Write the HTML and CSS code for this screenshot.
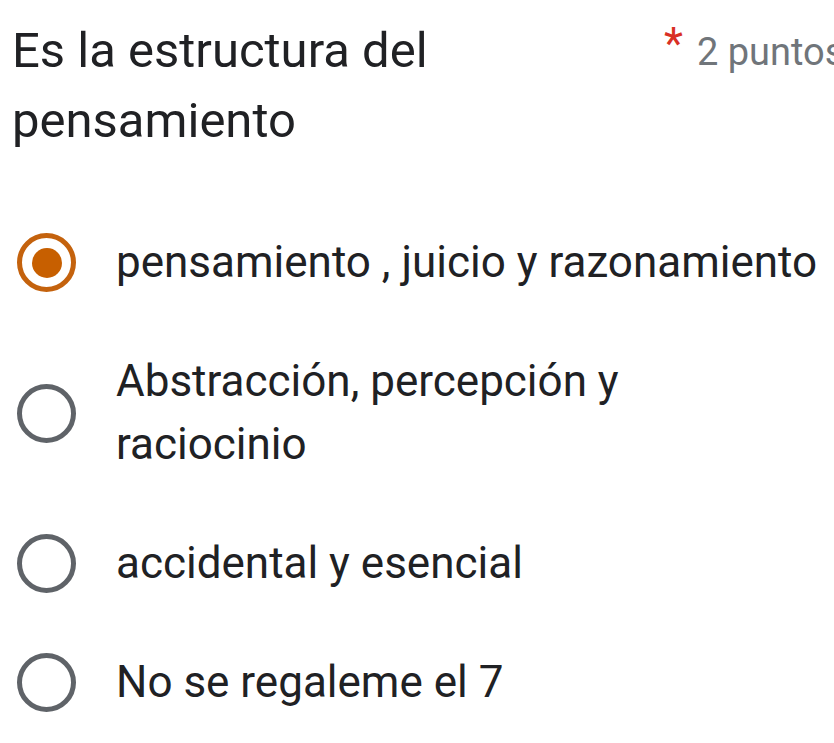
FILE: index.html
```html
<!DOCTYPE html>
<html lang="es">
<head>
  <meta charset="UTF-8" />
  <meta name="viewport" content="width=device-width, initial-scale=1.0"/>
  <title>Pregunta</title>
  <link rel="stylesheet" href="styles.css">
</head>
<body>
  <div class="question">
    <div class="question-head">
      <div class="question-title">Es la estructura del pensamiento</div>
      <div class="points">
        <span class="required">*</span>
        <span class="points-text">2 puntos</span>
      </div>
    </div>

    <div class="options">
      <label class="option">
        <span class="radio checked"></span>
        <span class="option-text">pensamiento , juicio y razonamiento</span>
      </label>
      <label class="option">
        <span class="radio"></span>
        <span class="option-text">Abstracción, percepción y raciocinio</span>
      </label>
      <label class="option">
        <span class="radio"></span>
        <span class="option-text">accidental y esencial</span>
      </label>
      <label class="option">
        <span class="radio"></span>
        <span class="option-text">No se regaleme el 7</span>
      </label>
    </div>
  </div>
</body>
</html>
```

FILE: styles.css
```css
body {
  margin: 0;
  background: #ffffff;
  font-family: Roboto, "Noto Sans", Arial, sans-serif;
  overflow: hidden;
}

.question {
  width: 834px;
  height: 743px;
  overflow: hidden;
  padding: 16px 0 0 12px;
  box-sizing: border-box;
}

.question-head {
  display: flex;
  align-items: flex-start;
  width: 900px;
}

.question-title {
  width: 632px;
  font-size: 49px;
  line-height: 70px;
  color: #202124;
}

.points {
  display: flex;
  align-items: flex-start;
  margin-left: 20px;
  white-space: nowrap;
}

.required {
  color: #d93025;
  font-size: 44px;
  line-height: 56px;
  margin-right: 14px;
}

.points-text {
  color: #70757a;
  font-size: 38px;
  line-height: 72px;
}

.options {
  margin-top: 75px;
}

.option {
  display: flex;
  align-items: center;
  min-height: 60px;
  margin-bottom: 56px;
}

.radio {
  flex: none;
  width: 49px;
  height: 49px;
  border: 5px solid #5f6368;
  border-radius: 50%;
  margin: 0 40px 0 5px;
  position: relative;
}

.radio.checked {
  border-color: #c4620d;
}

.radio.checked::after {
  content: "";
  position: absolute;
  top: 9.5px;
  left: 9.5px;
  width: 30px;
  height: 30px;
  border-radius: 50%;
  background: #c75f00;
}

.option-text {
  width: 705px;
  font-size: 44px;
  line-height: 63px;
  color: #202124;
}

.option:nth-child(2) .option-text {
  width: 560px;
}
```
